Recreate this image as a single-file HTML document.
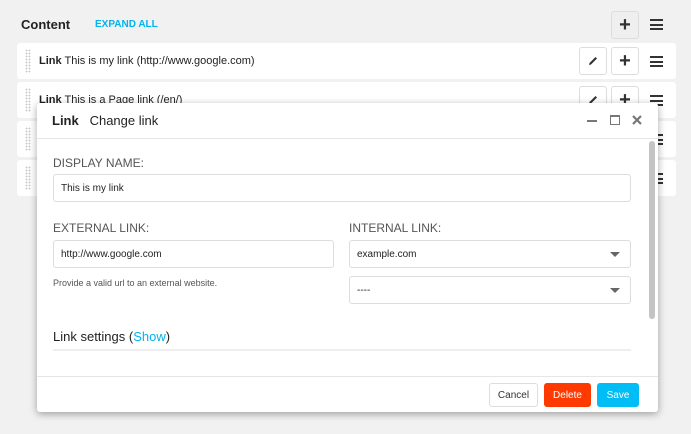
<!DOCTYPE html>
<html><head><style>
*{box-sizing:border-box;margin:0;padding:0}
body{width:691px;height:434px;background:#f1f1f1;font-family:"Liberation Sans",Arial,sans-serif;position:relative;overflow:hidden;color:#222}
.a{position:absolute}
.row{position:absolute;left:17px;width:659px;height:36px;background:#fff;border-radius:3px}
.drag{position:absolute;left:8px;top:6px;width:6px;height:24px;background-image:radial-gradient(circle,#ccc 0.8px,transparent 1px);background-size:3px 3px}
.btn{position:absolute;width:28px;height:28px;border:1px solid #ddd;border-radius:3px;background:#fff;font-size:20px;font-weight:bold;display:flex;align-items:center;justify-content:center;color:#333}
.ham{position:absolute;width:13px;height:11px;border-top:2px solid #333;border-bottom:2px solid #333}
.ham:after{content:"";position:absolute;left:0;right:0;top:2.5px;border-top:2px solid #333}
.lbl{position:absolute;font-size:12px;color:#555}
.inp{position:absolute;height:28px;border:1px solid #ddd;border-radius:3px;background:#fff;font-size:10px;padding:0 7px;display:flex;align-items:center;color:#222}
.car{position:absolute;right:10px;top:11px;border-left:5px solid transparent;border-right:5px solid transparent;border-top:5px solid #666}
.fb{position:absolute;top:383px;height:24px;border-radius:3px;font-size:10px;display:flex;align-items:center;justify-content:center}
</style></head><body>
<div class="a" style="left:21px;top:17px;font-size:13px;font-weight:bold">Content</div>
<div class="a" style="left:95px;top:19px;font-size:10px;font-weight:bold;color:#00b4f0">EXPAND ALL</div>
<div class="btn" style="left:611px;top:11px;background:#efefef">+</div>
<div class="ham" style="left:650px;top:19px"></div>

<div class="row" style="top:43px"><div class="drag"></div>
<div class="a" style="left:22px;top:12px;font-size:11px"><b>Link</b> This is my link (http://www.google.com)</div>
<div class="btn" style="left:562px;top:4px"><svg width="12" height="12" viewBox="0 0 12 12"><path d="M2 10 L2.5 8 L8.5 2 L10 3.5 L4 9.5 Z" fill="#333"/></svg></div>
<div class="btn" style="left:594px;top:4px">+</div><div class="ham" style="left:633px;top:13px"></div></div>
<div class="row" style="top:82px"><div class="drag"></div>
<div class="a" style="left:22px;top:12px;font-size:11px"><b>Link</b> This is a Page link (/en/)</div>
<div class="btn" style="left:562px;top:4px"><svg width="12" height="12" viewBox="0 0 12 12"><path d="M2 10 L2.5 8 L8.5 2 L10 3.5 L4 9.5 Z" fill="#333"/></svg></div>
<div class="btn" style="left:594px;top:4px">+</div><div class="ham" style="left:633px;top:13px"></div></div>
<div class="row" style="top:121px"><div class="drag"></div><div class="ham" style="left:633px;top:13px"></div></div>
<div class="row" style="top:160px"><div class="drag"></div><div class="ham" style="left:633px;top:13px"></div></div>

<div class="a" style="left:37px;top:103px;width:621px;height:309px;background:#fff;border-radius:3px;box-shadow:0 2px 8px rgba(0,0,0,.35)">
<div class="a" style="left:0;top:0;width:621px;height:36px;border-bottom:1px solid #e6e6e6"></div>
<div class="a" style="left:15px;top:10px;font-size:13px"><b>Link</b>&nbsp;&nbsp; Change link</div>
<div class="a" style="left:550px;top:17px;width:10px;border-top:2px solid #777"></div>
<div class="a" style="left:573px;top:12px;width:10px;height:10px;border:1.5px solid #777;border-top-width:2.5px"></div>
<svg class="a" style="left:595px;top:12px" width="10" height="10" viewBox="0 0 10 10"><path d="M1 1 L9 9 M9 1 L1 9" stroke="#777" stroke-width="2.2"/></svg>
<div class="a" style="left:612px;top:38px;width:6px;height:178px;background:#c4c4c4;border-radius:3px"></div>
<div class="lbl" style="left:16px;top:53px">DISPLAY NAME:</div>
<div class="inp" style="left:16px;top:71px;width:578px">This is my link</div>
<div class="lbl" style="left:16px;top:118px">EXTERNAL LINK:</div>
<div class="inp" style="left:16px;top:137px;width:281px">http://www.google.com</div>
<div class="a" style="left:16px;top:175px;font-size:9px;color:#555">Provide a valid url to an external website.</div>
<div class="lbl" style="left:312px;top:118px">INTERNAL LINK:</div>
<div class="inp" style="left:312px;top:137px;width:282px">example.com<div class="car"></div></div>
<div class="inp" style="left:312px;top:173px;width:282px">----<div class="car"></div></div>
<div class="a" style="left:16px;top:226px;font-size:13px">Link settings (<span style="color:#00b4f0">Show</span>)</div>
<div class="a" style="left:16px;top:246px;width:578px;border-top:2px solid #eee"></div>
<div class="a" style="left:0;top:273px;width:621px;border-top:1px solid #e6e6e6"></div>
</div>
<div class="fb" style="left:489px;width:49px;border:1px solid #ddd;background:#fff;color:#333">Cancel</div>
<div class="fb" style="left:544px;width:47px;background:#ff3a00;color:#fff">Delete</div>
<div class="fb" style="left:597px;width:42px;background:#00bdf5;color:#fff">Save</div>
</body></html>
